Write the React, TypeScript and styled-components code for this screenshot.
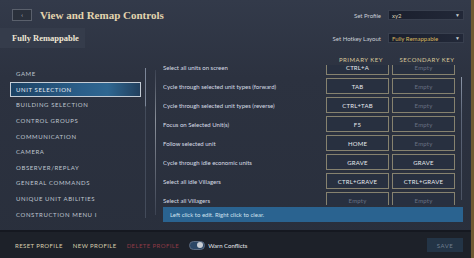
import React from "react";
import styled, { createGlobalStyle } from "styled-components";

const GlobalStyle = createGlobalStyle`
  html, body {
    margin: 0;
    padding: 0;
    background: #2b313e;
    overflow: hidden;
  }
`;

const SANS = `"Lato", "Open Sans", "Liberation Sans", sans-serif`;
const SERIF = `"Liberation Serif", "DejaVu Serif", serif`;

const Screen = styled.div`
  width: 474px;
  height: 258px;
  box-sizing: border-box;
  border-right: 3px solid #6f5a33;
  display: flex;
  flex-direction: column;
  background: linear-gradient(180deg, #333a4a 0%, #2c3240 30%, #292f3c 100%);
  font-family: ${SANS};
  overflow: hidden;
`;

const Header = styled.div`
  height: 28px;
  display: flex;
  align-items: center;
  padding: 2px 7px 0 12px;
  box-sizing: border-box;
`;

const BackButton = styled.div`
  width: 20px;
  height: 12px;
  box-sizing: border-box;
  border: 1px solid #5a606c;
  background: #2a303b;
  color: #c9ccd2;
  font-size: 6px;
  line-height: 10px;
  text-align: center;
`;

const Title = styled.div`
  margin-left: 8px;
  font-family: ${SERIF};
  font-size: 11px;
  font-weight: bold;
  color: #e3d4ae;
`;

const Spacer = styled.div`
  flex: 1;
`;

const FieldLabel = styled.span`
  font-size: 6px;
  color: #c9ced6;
  margin-right: 7px;
`;

const Dropdown = styled.div<{ $gold?: boolean }>`
  width: 76px;
  height: 10px;
  box-sizing: border-box;
  border: 1px solid #383f4e;
  background: linear-gradient(90deg, #1a1f2d, #222838);
  display: flex;
  align-items: center;
  padding: 0 3px;
  font-size: 6px;
  color: ${(p) => (p.$gold ? "#d9b85e" : "#d6cfb4")};
`;

const Caret = styled.span`
  margin-left: auto;
  font-size: 5px;
  color: #c8ccd2;
`;

const SubHeader = styled.div`
  height: 20px;
  display: flex;
  align-items: center;
  padding-right: 7px;
`;

const Tab = styled.div`
  width: 85px;
  height: 100%;
  box-sizing: border-box;
  padding-left: 12px;
  display: flex;
  align-items: center;
  background: #353c4b;
  font-family: ${SERIF};
  font-weight: bold;
  font-size: 8.5px;
  color: #efe6d4;
`;

const Body = styled.div`
  height: 182px;
  display: flex;
`;

const Sidebar = styled.div`
  width: 145px;
  box-sizing: border-box;
  padding: 18px 4px 0 10px;
`;

const NavItem = styled.div<{ $active?: boolean }>`
  height: 15.6px;
  box-sizing: border-box;
  display: flex;
  align-items: center;
  padding-left: ${(p) => (p.$active ? 5 : 6)}px;
  font-size: 6px;
  letter-spacing: 0.6px;
  color: ${(p) => (p.$active ? "#e4e9f0" : "#bfc5ce")};
  border: ${(p) => (p.$active ? "1px solid #c5cdd6" : "none")};
  background: ${(p) =>
    p.$active
      ? "linear-gradient(90deg, #1c4264 0%, #2b5f8a 55%, #2f6791 75%, #22405e 100%)"
      : "transparent"};
`;

const Track = styled.div<{ $top: number; $height: number }>`
  width: 1px;
  margin-top: ${(p) => p.$top}px;
  height: ${(p) => p.$height}px;
  background: linear-gradient(180deg, #7c8698 0%, #7c8698 25%, #434b5a 26%, #434b5a 100%);
`;

const Divider = styled.div`
  width: 1px;
  margin-left: 9px;
  margin-top: 22px;
  height: 145px;
  background: linear-gradient(180deg, #3c4352 0%, #8a909a 35%, #6a707c 60%, #3c4352 100%);
`;

const Panel = styled.div`
  width: 300px;
  margin-left: 7px;
  display: flex;
  flex-direction: column;
`;

const TableHeader = styled.div`
  height: 17px;
  display: flex;
  align-items: flex-end;
  padding-bottom: 2px;
  box-sizing: border-box;
`;

const HeaderCell = styled.div`
  width: 63px;
  margin-left: 3px;
  padding-left: 7px;
  box-sizing: border-box;
  white-space: nowrap;
  text-align: center;
  font-size: 6px;
  letter-spacing: 0.5px;
  color: #d9c99a;
  &:first-child {
    margin-left: 163px;
  }
`;

const ListArea = styled.div`
  height: 140px;
  display: flex;
  overflow: hidden;
`;

const Rows = styled.div`
  width: 292px;
  margin-top: -6px;
  display: flex;
  flex-direction: column;
  gap: 3px;
`;

const Row = styled.div`
  height: 16px;
  display: flex;
  align-items: center;
  gap: 3px;
`;

const ActionLabel = styled.div`
  width: 160px;
  font-size: 6px;
  color: #d8dde6;
  white-space: nowrap;
`;

const KeyBox = styled.div<{ $empty?: boolean }>`
  width: 63px;
  height: 16px;
  box-sizing: border-box;
  border: 1px solid #86826f;
  background: #283040;
  display: flex;
  align-items: center;
  justify-content: center;
  font-size: 6px;
  letter-spacing: 0.2px;
  color: ${(p) => (p.$empty ? "#687082" : "#e6e9ee")};
`;

const ListScroll = styled.div`
  width: 1px;
  margin-left: 6px;
  margin-top: 12px;
  height: 123px;
  background: linear-gradient(180deg, #8c96a8 0%, #5e6779 30%, #4a5262 100%);
`;

const Hint = styled.div`
  margin-top: 2px;
  height: 15px;
  background: #2a6390;
  display: flex;
  align-items: center;
  padding-left: 7px;
  font-size: 6px;
  color: #cfe2ef;
`;

const Footer = styled.div`
  height: 28px;
  box-sizing: border-box;
  border-top: 2px solid #151820;
  background: #1d2129;
  display: flex;
  align-items: center;
  padding: 0 8px 0 15px;
`;

const FooterLink = styled.span<{ $danger?: boolean }>`
  font-size: 6px;
  letter-spacing: 0.4px;
  margin-right: 10px;
  color: ${(p) => (p.$danger ? "#8e3a46" : "#d8ceae")};
`;

const Toggle = styled.div`
  width: 16px;
  height: 9px;
  box-sizing: border-box;
  border-radius: 5px;
  border: 1px solid #5b6a80;
  background: #2c4766;
  display: flex;
  align-items: center;
  justify-content: flex-end;
  padding: 1px;
  margin-right: 3px;
`;

const Knob = styled.div`
  width: 6px;
  height: 6px;
  border-radius: 50%;
  background: #c9cdd3;
`;

const ToggleLabel = styled.span`
  font-size: 6px;
  color: #e6e9ee;
`;

const SaveButton = styled.div`
  margin-left: auto;
  width: 36px;
  height: 14px;
  background: #233446;
  display: flex;
  align-items: center;
  justify-content: center;
  font-size: 6px;
  letter-spacing: 0.5px;
  color: #6f7e8e;
`;

const categories = [
  "GAME",
  "UNIT SELECTION",
  "BUILDING SELECTION",
  "CONTROL GROUPS",
  "COMMUNICATION",
  "CAMERA",
  "OBSERVER/REPLAY",
  "GENERAL COMMANDS",
  "UNIQUE UNIT ABILITIES",
  "CONSTRUCTION MENU I",
];

const bindings: [string, string, string][] = [
  ["Select all units on screen", "CTRL+A", ""],
  ["Cycle through selected unit types (forward)", "TAB", ""],
  ["Cycle through selected unit types (reverse)", "CTRL+TAB", ""],
  ["Focus on Selected Unit(s)", "F5", ""],
  ["Follow selected unit", "HOME", ""],
  ["Cycle through idle economic units", "GRAVE", "GRAVE"],
  ["Select all idle Villagers", "CTRL+GRAVE", "CTRL+GRAVE"],
  ["Select all Villagers", "", ""],
];

function App() {
  return (
    <Screen>
      <GlobalStyle />
      <Header>
        <BackButton>‹</BackButton>
        <Title>View and Remap Controls</Title>
        <Spacer />
        <FieldLabel>Set Profile</FieldLabel>
        <Dropdown>
          xy2<Caret>▼</Caret>
        </Dropdown>
      </Header>

      <SubHeader>
        <Tab>Fully Remappable</Tab>
        <Spacer />
        <FieldLabel>Set Hotkey Layout</FieldLabel>
        <Dropdown $gold>
          Fully Remappable<Caret>▼</Caret>
        </Dropdown>
      </SubHeader>

      <Body>
        <Sidebar>
          {categories.map((c) => (
            <NavItem key={c} $active={c === "UNIT SELECTION"}>
              {c}
            </NavItem>
          ))}
        </Sidebar>
        <Track $top={20} $height={150} />
        <Divider />
        <Panel>
          <TableHeader>
            <HeaderCell>PRIMARY KEY</HeaderCell>
            <HeaderCell>SECONDARY KEY</HeaderCell>
          </TableHeader>
          <ListArea>
            <Rows>
              {bindings.map(([label, primary, secondary]) => (
                <Row key={label}>
                  <ActionLabel>{label}</ActionLabel>
                  <KeyBox $empty={!primary}>{primary || "Empty"}</KeyBox>
                  <KeyBox $empty={!secondary}>{secondary || "Empty"}</KeyBox>
                </Row>
              ))}
            </Rows>
            <ListScroll />
          </ListArea>
          <Hint>Left click to edit. Right click to clear.</Hint>
        </Panel>
      </Body>

      <Footer>
        <FooterLink>RESET PROFILE</FooterLink>
        <FooterLink>NEW PROFILE</FooterLink>
        <FooterLink $danger>DELETE PROFILE</FooterLink>
        <Toggle>
          <Knob />
        </Toggle>
        <ToggleLabel>Warn Conflicts</ToggleLabel>
        <SaveButton>SAVE</SaveButton>
      </Footer>
    </Screen>
  );
}

export default App;
